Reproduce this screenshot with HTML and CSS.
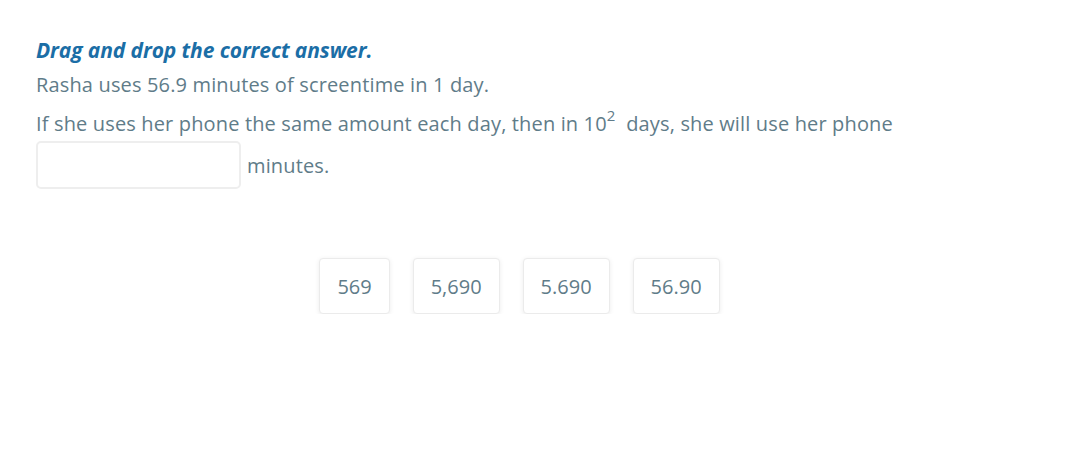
FILE: index.html
```html
<!DOCTYPE html>
<html>
<head>
<meta charset="utf-8">
<link rel="stylesheet" href="styles.css">
</head>
<body>
<main class="question">
  <h2 class="prompt">Drag and drop the correct answer.</h2>
  <p class="line">Rasha uses 56.9 minutes of screentime in 1 day.</p>
  <p class="line">If she uses her phone the same amount each day, then in 10<sup>2</sup>&nbsp; days, she will use her phone</p>
  <div class="answer-row">
    <div class="drop"></div>
    <span class="unit">minutes.</span>
  </div>
  <div class="choices">
    <div class="chip">569</div>
    <div class="chip">5,690</div>
    <div class="chip">5.690</div>
    <div class="chip">56.90</div>
  </div>
</main>
</body>
</html>
```

FILE: styles.css
```css
html, body {
  margin: 0;
  padding: 0;
  background: #fff;
}
body {
  font-family: "Open Sans", "Noto Sans", sans-serif;
  color: #5f7c89;
}
.question {
  width: 967px;
  padding: 37px 0 0 36px;
  box-sizing: content-box;
}
.prompt {
  margin: 0;
  font-size: 21px;
  font-weight: 700;
  font-style: italic;
  color: #1b6ea6;
  line-height: 26px;
  letter-spacing: -0.1px;
}
.line {
  margin: 0;
  font-size: 20px;
  line-height: 26px;
  letter-spacing: 0.15px;
}
.prompt + .line {
  margin-top: 9px;
}
.line + .line {
  margin-top: 13px;
}
sup {
  font-size: 15px;
  line-height: 0;
  vertical-align: 10px;
}
.answer-row {
  display: flex;
  align-items: center;
  gap: 6px;
  margin-top: 4px;
}
.drop {
  width: 201px;
  height: 44px;
  border: 2px solid #eeeeee;
  border-radius: 5px;
}
.unit {
  font-size: 20px;
  letter-spacing: 0.15px;
}
.choices {
  display: flex;
  justify-content: center;
  gap: 23px;
  margin-top: 69px;
}
.chip {
  height: 54px;
  padding: 0 17px;
  border: 1px solid #ebebeb;
  border-radius: 4px;
  box-shadow: 0 1px 5px rgba(0,0,0,0.08);
  display: flex;
  align-items: center;
  font-size: 20px;
  background: #fff;
}
```
